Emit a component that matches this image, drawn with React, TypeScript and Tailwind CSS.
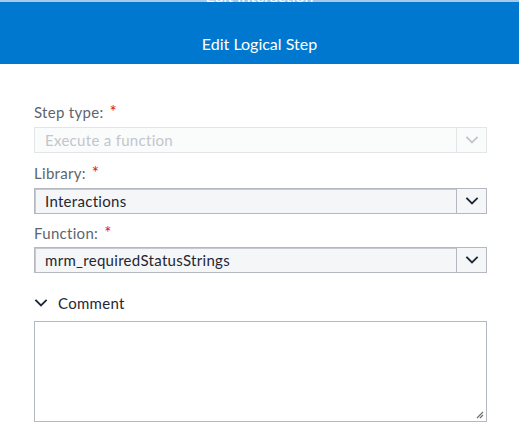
import React from "react";

const Chevron = ({ color, size = 14 }: { color: string; size?: number }) => (
  <svg width={size} height={size} viewBox="0 0 14 14" fill="none">
    <path d="M2 4.5 L7 9.5 L12 4.5" stroke={color} strokeWidth="1.8" strokeLinecap="square" />
  </svg>
);

function Select({ value, disabled }: { value: string; disabled?: boolean }) {
  return (
    <div
      className={`flex h-[26px] w-[453px] border ${
        disabled ? "border-[#e3e5e8] bg-[#fafbfb]" : "border-[#b3b8c1] bg-[#f5f6f8]"
      }`}
    >
      <div
        className={`flex flex-1 items-center pl-[10px] text-[15px] tracking-[0.3px] ${
          disabled ? "text-[#c2c6cb]" : "text-[#1f2733] shadow-[inset_1px_1px_0_#c5cad2]"
        }`}
      >
        {value}
      </div>
      <div
        className={`flex w-[30px] items-center justify-center border-l ${
          disabled ? "border-[#e3e5e8] bg-[#fafbfb]" : "border-[#b3b8c1] bg-[#f5f6f8]"
        }`}
      >
        <Chevron color={disabled ? "#c3c6ca" : "#1c2838"} />
      </div>
    </div>
  );
}

function Label({ text }: { text: string }) {
  return (
    <div className="flex items-center gap-[6px] text-[15px] leading-[18px] tracking-[0.3px] text-[#5d6570]">
      <span>{text}</span>
      <span className="text-[17px] leading-[18px] text-[#e0102c]">*</span>
    </div>
  );
}

export default function App() {
  return (
    <div className="h-[439px] w-[519px] bg-white" style={{ fontFamily: "Lato, 'Open Sans', sans-serif" }}>
      <div className="relative h-[2px] overflow-hidden bg-[#a6c9ea]">
        <div className="absolute left-0 right-0 top-[-13px] text-center text-[16px] leading-[18px] text-white">Edit Interaction</div>
      </div>
      <div className="flex h-[62px] items-end justify-center bg-[#0078cf] pb-[11px] text-[16px] leading-[19px] text-white">
        Edit Logical Step
      </div>
      <div className="flex flex-col pl-[34px] pt-[39px]">
        <Label text="Step type:" />
        <div className="mt-[6px]">
          <Select value="Execute a function" disabled />
        </div>
        <div className="mt-[11px]">
          <Label text="Library:" />
        </div>
        <div className="mt-[6px]">
          <Select value="Interactions" />
        </div>
        <div className="mt-[10px]">
          <Label text="Function:" />
        </div>
        <div className="mt-[5px]">
          <Select value="mrm_requiredStatusStrings" />
        </div>
        <div className="mt-[21px] flex items-center gap-[10px] text-[15px] leading-[18px] tracking-[0.3px] text-[#1f2733]">
          <Chevron color="#1c2838" />
          <span>Comment</span>
        </div>
        <div className="relative mt-[9px] h-[101px] w-[453px] border border-[#b3b8c1] bg-white">
          <svg className="absolute bottom-[2px] right-[2px]" width="8" height="8" viewBox="0 0 8 8">
            <path d="M7 1 L1 7 M7 4 L4 7" stroke="#6a6f76" strokeWidth="1.2" />
          </svg>
        </div>
      </div>
    </div>
  );
}
